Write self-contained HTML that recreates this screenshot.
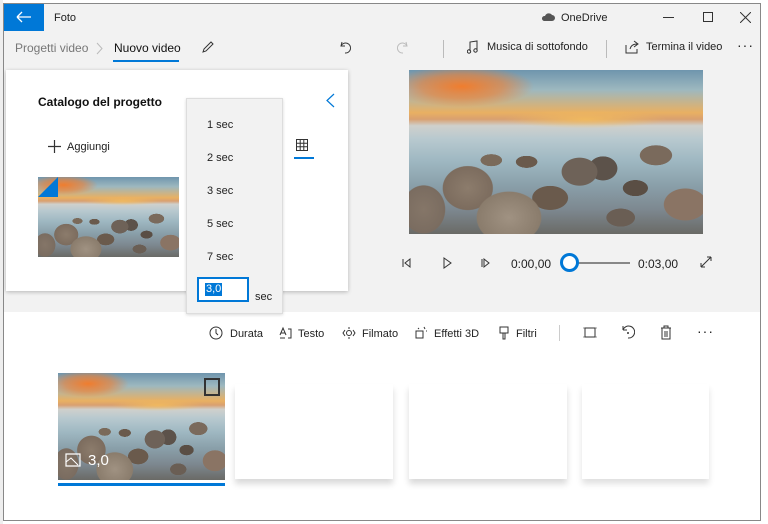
<!DOCTYPE html>
<html><head><meta charset="utf-8">
<style>
*{margin:0;padding:0;box-sizing:border-box}
body{width:768px;height:524px;overflow:hidden;background:#fff;font-family:"Liberation Sans",sans-serif;font-size:11px;color:#222;position:relative}
.abs{position:absolute;white-space:nowrap}
.layer{position:absolute;left:0;top:0;width:758px;height:518px}
.win{left:3px;top:3px;width:758px;height:518px;border:1px solid #888;background:#f2f2f2;overflow:hidden}
.photo{background:
radial-gradient(ellipse 10% 14% at 58% 62%,#6e6258 0,#6e6258 60%,transparent 62%),
radial-gradient(ellipse 8% 12% at 66% 60%,#5c524a 0,#5c524a 60%,transparent 62%),
radial-gradient(ellipse 9% 10% at 84% 52%,#7a6a5c 0,#7a6a5c 60%,transparent 62%),
radial-gradient(ellipse 12% 16% at 94% 82%,#8a7464 0,#8a7464 60%,transparent 62%),
radial-gradient(ellipse 7% 8% at 77% 72%,#5a4e44 0,#5a4e44 60%,transparent 62%),
radial-gradient(ellipse 8% 9% at 72% 90%,#6a5e54 0,#6a5e54 60%,transparent 62%),
radial-gradient(ellipse 18% 26% at 34% 90%,#a09282 0,#8a7c6c 60%,transparent 62%),
radial-gradient(ellipse 14% 22% at 20% 72%,#8c7c6c 0,#7c6c5e 60%,transparent 62%),
radial-gradient(ellipse 12% 24% at 5% 85%,#857668 0,#7a6c60 60%,transparent 62%),
radial-gradient(ellipse 10% 12% at 48% 78%,#6a5a4c 0,#6a5a4c 60%,transparent 62%),
radial-gradient(ellipse 6% 6% at 40% 56%,#6a5a4c 0,#6a5a4c 60%,transparent 62%),
radial-gradient(ellipse 6% 6% at 28% 55%,#7a6a5a 0,#7a6a5a 60%,transparent 62%),
radial-gradient(ellipse 35% 18% at 18% 10%,#f07d2e 0,rgba(240,125,46,.6) 40%,transparent 70%),
radial-gradient(ellipse 40% 8% at 60% 30%,rgba(245,190,90,.8) 0,transparent 70%),
linear-gradient(180deg,#6f95ad 0%,#9db8bf 12%,#e9b062 26%,#d9a070 30%,#cfd0cc 34%,#b8c9cf 42%,#9fb8c2 55%,#8aa0aa 70%,#7d8890 85%,#6a6a66 100%);}
</style></head><body>
<div class="abs" style="left:0;top:0;width:3px;height:524px;background:#eee"></div>
<div class="abs win">
 <div class="abs" style="left:0;top:0;width:40px;height:27px;background:#0078d7"></div>
 <svg class="abs" style="left:12px;top:7px" width="16" height="12"><path d="M1 6H15M1 6L6 1M1 6L6 11" stroke="#fff" stroke-width="1.3" fill="none"/></svg>
 <div class="abs" style="left:50px;top:8px;font-size:11px">Foto</div>
 <svg class="abs" style="left:537px;top:8px" width="14" height="10"><path d="M3 9H11A3 3 0 0 0 11 3A4 4 0 0 0 4 4A2.5 2.5 0 0 0 3 9Z" fill="#555"/></svg>
 <div class="abs" style="left:557px;top:8px">OneDrive</div>
 <div class="abs" style="left:659px;top:13px;width:11px;height:1px;background:#333"></div>
 <div class="abs" style="left:699px;top:8px;width:10px;height:10px;border:1px solid #333"></div>
 <svg class="abs" style="left:736px;top:8px" width="11" height="11"><path d="M0 0L11 11M11 0L0 11" stroke="#333"/></svg>
 <div class="abs" style="left:11px;top:37px;font-size:12px;color:#777">Progetti video</div>
 <svg class="abs" style="left:92px;top:38px" width="8" height="13"><path d="M1 1L6 6.5L1 12" stroke="#bbb" fill="none"/></svg>
 <div class="abs" style="left:110px;top:37px;font-size:12px;color:#111">Nuovo video</div>
 <div class="abs" style="left:109px;top:56px;width:66px;height:2px;background:#0078d7"></div>
 <svg class="abs" style="left:197px;top:36px" width="14" height="14"><path d="M2 12L3 9L10 2L12 4L5 11Z" stroke="#333" fill="none"/></svg>
 <svg class="abs" style="left:335px;top:36px" width="14" height="14"><path d="M3 2L2 6L6 6M2 6A5 5 0 1 1 6 13" stroke="#333" fill="none"/></svg>
 <svg class="abs" style="left:391px;top:36px" width="14" height="14"><path d="M11 2L12 6L8 6M12 6A5 5 0 1 0 8 13" stroke="#bbb" fill="none"/></svg>
 <div class="abs" style="left:439px;top:36px;width:1px;height:18px;background:#bbb"></div>
 <svg class="abs" style="left:463px;top:36px" width="12" height="14"><path d="M3 11V2L10 1V10" stroke="#333" fill="none"/><circle cx="2" cy="11.5" r="1.7" stroke="#333" fill="none"/><circle cx="8.5" cy="10.5" r="1.7" stroke="#333" fill="none"/></svg>
 <div class="abs" style="left:483px;top:37px">Musica di sottofondo</div>
 <div class="abs" style="left:602px;top:36px;width:1px;height:18px;background:#bbb"></div>
 <svg class="abs" style="left:621px;top:36px" width="15" height="14"><path d="M1 5V13H12V9M5 9C6 5 9 4 12 4M9 1L13 4L9 7" stroke="#333" fill="none"/></svg>
 <div class="abs" style="left:642px;top:37px">Termina il video</div>
 <div class="abs" style="left:733px;top:33px;font-size:14px;letter-spacing:1px">···</div>
 <div class="abs" style="left:2px;top:66px;width:342px;height:221px;background:#fff;box-shadow:0 1px 4px rgba(0,0,0,.25)"></div>
 <div class="abs" style="left:34px;top:91px;font-size:12px;font-weight:bold;color:#111">Catalogo del progetto</div>
 <svg class="abs" style="left:322px;top:89px" width="9" height="15"><path d="M8 1L1 7.5L8 14" stroke="#0078d7" fill="none" stroke-width="1.2"/></svg>
 <svg class="abs" style="left:44px;top:136px" width="13" height="13"><path d="M6.5 0V13M0 6.5H13" stroke="#333" stroke-width="1.2"/></svg>
 <div class="abs" style="left:63px;top:137px">Aggiungi</div>
 <svg class="abs" style="left:292px;top:135px" width="12" height="12"><path d="M0.5 .5H11.5V11.5H.5ZM4.2 .5V11.5M7.8 .5V11.5M.5 4.2H11.5M.5 7.8H11.5" stroke="#333" fill="none"/></svg>
 <div class="abs" style="left:290px;top:153px;width:20px;height:2px;background:#0078d7"></div>
 <div class="abs photo" style="left:34px;top:173px;width:141px;height:80px"></div>
 <svg class="abs" style="left:34px;top:173px" width="20" height="20"><path d="M20 0V20H0Z" fill="#0078d7"/></svg>
 <div class="abs" style="left:182px;top:94px;width:97px;height:216px;background:#f2f2f2;border:1px solid #ddd;box-shadow:0 1px 3px rgba(0,0,0,.15);z-index:2"></div>
 <div class="layer" style="z-index:3">
 <div class="abs" style="left:203px;top:115px">1 sec</div>
 <div class="abs" style="left:203px;top:148px">2 sec</div>
 <div class="abs" style="left:203px;top:181px">3 sec</div>
 <div class="abs" style="left:203px;top:214px">5 sec</div>
 <div class="abs" style="left:203px;top:247px">7 sec</div>
 <div class="abs" style="left:193px;top:273px;width:52px;height:25px;border:2px solid #0078d7;background:#fff"></div>
 <div class="abs" style="left:201px;top:279px;background:#0078d7;color:#fff;padding:0 1px;font-size:11px;line-height:13px">3,0</div>
 <div class="abs" style="left:251px;top:287px">sec</div>
 </div>
 <div class="abs photo" style="left:405px;top:66px;width:294px;height:164px"></div>
 <svg class="abs" style="left:397px;top:253px" width="12" height="12"><path d="M9 2L4 6L9 10ZM2 2V10" stroke="#333" fill="none"/></svg>
 <svg class="abs" style="left:437px;top:253px" width="12" height="12"><path d="M3 1L10 6L3 11Z" stroke="#333" fill="none"/></svg>
 <svg class="abs" style="left:476px;top:253px" width="12" height="12"><path d="M4 2L9 6L4 10ZM2 2V10" stroke="#333" fill="none"/></svg>
 <div class="abs" style="left:507px;top:253px;font-size:12px">0:00,00</div>
 <div class="abs" style="left:566px;top:258px;width:60px;height:2px;background:#888"></div>
 <div class="abs" style="left:556px;top:249px;width:19px;height:19px;border-radius:50%;border:3px solid #0078d7;background:#fff"></div>
 <div class="abs" style="left:634px;top:253px;font-size:12px">0:03,00</div>
 <svg class="abs" style="left:696px;top:252px" width="12" height="12"><path d="M1 11L11 1M1 11V7M1 11H5M11 1V5M11 1H7" stroke="#333" fill="none"/></svg>
 <div class="abs" style="left:0;top:308px;width:758px;height:210px;background:#fff;z-index:1"></div>
 <div class="layer" style="z-index:4">
 <svg class="abs" style="left:205px;top:322px" width="14" height="14"><circle cx="7" cy="7" r="6" stroke="#333" fill="none"/><path d="M7 3V7L9 9" stroke="#333" fill="none"/></svg>
 <div class="abs" style="left:226px;top:324px">Durata</div>
 <svg class="abs" style="left:275px;top:322px" width="14" height="14"><path d="M1 9L4 2L7 9M2 7H6M9 3H12V12H9M1 12H6" stroke="#333" fill="none"/></svg>
 <div class="abs" style="left:294px;top:324px">Testo</div>
 <svg class="abs" style="left:338px;top:322px" width="14" height="14"><circle cx="7" cy="7" r="2.5" stroke="#333" fill="none"/><path d="M3 4L1 7L3 10M11 4L13 7L11 10M7 1V3M7 11V13" stroke="#333" fill="none"/></svg>
 <div class="abs" style="left:358px;top:324px">Filmato</div>
 <svg class="abs" style="left:410px;top:321px" width="14" height="15"><rect x="2" y="6" width="7" height="7" stroke="#333" fill="none"/><path d="M10 2L11 4M12 6H13M4 3L5 4" stroke="#333"/></svg>
 <div class="abs" style="left:430px;top:324px">Effetti 3D</div>
 <svg class="abs" style="left:495px;top:322px" width="10" height="14"><path d="M1 1H9V7H1ZM4 7V13H6V7" stroke="#333" fill="none"/></svg>
 <div class="abs" style="left:512px;top:324px">Filtri</div>
 <div class="abs" style="left:555px;top:321px;width:1px;height:16px;background:#ccc"></div>
 <svg class="abs" style="left:579px;top:322px" width="14" height="13"><path d="M2 2H12V11H2Z" stroke="#333" fill="none"/><path d="M0 2H14M0 11H14" stroke="#333" stroke-width=".6"/></svg>
 <svg class="abs" style="left:617px;top:321px" width="14" height="15"><path d="M2 5A6 6 0 1 1 7 13M2 5V1M2 5H6" stroke="#333" fill="none"/><circle cx="7" cy="8" r="1" fill="#333"/></svg>
 <svg class="abs" style="left:656px;top:321px" width="12" height="15"><path d="M1 3H11M4 3V1H8V3M2 3V14H10V3M5 6V12M7 6V12" stroke="#333" fill="none"/></svg>
 <div class="abs" style="left:693px;top:319px;font-size:14px;letter-spacing:1px">···</div>
 <div class="abs photo" style="left:54px;top:369px;width:167px;height:107px"></div>
 <div class="abs" style="left:200px;top:374px;width:16px;height:18px;border:2px solid #333"></div>
 <svg class="abs" style="left:61px;top:449px" width="16" height="14"><path d="M1 1H15V13H1Z" stroke="#fff" fill="none" stroke-width="1.2"/><path d="M1 9L6 5L13 12" stroke="#fff" fill="none"/></svg>
 <div class="abs" style="left:84px;top:448px;font-size:15px;color:#fff">3,0</div>
 <div class="abs" style="left:54px;top:479px;width:167px;height:3px;background:#0078d7"></div>
 <div class="abs" style="left:231px;top:380px;width:158px;height:95px;background:#fff;box-shadow:0 5px 6px rgba(0,0,0,.15)"></div>
 <div class="abs" style="left:405px;top:380px;width:158px;height:95px;background:#fff;box-shadow:0 5px 6px rgba(0,0,0,.15)"></div>
 <div class="abs" style="left:578px;top:380px;width:127px;height:95px;background:#fff;box-shadow:0 5px 6px rgba(0,0,0,.12)"></div>
 </div>
</div>
</body></html>
